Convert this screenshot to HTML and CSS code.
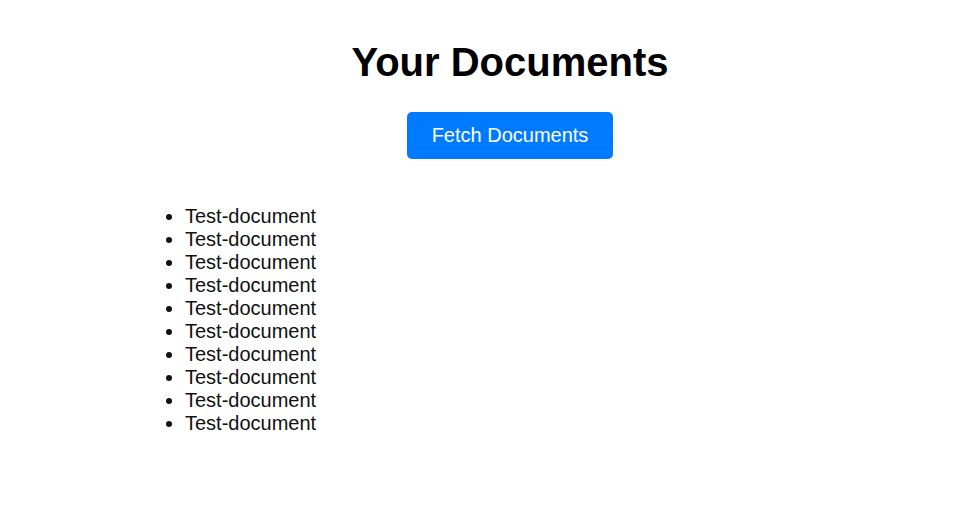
FILE: index.html
```html
<!DOCTYPE html>
<html lang="en">
<head>
<meta charset="utf-8">
<title>Your Documents</title>
<link rel="stylesheet" href="styles.css">
</head>
<body>
<div class="page">
  <h1 class="title">Your Documents</h1>
  <div class="actions">
    <button class="fetch-btn" type="button">Fetch Documents</button>
  </div>
  <ul class="doc-list">
    <li>Test-document</li>
    <li>Test-document</li>
    <li>Test-document</li>
    <li>Test-document</li>
    <li>Test-document</li>
    <li>Test-document</li>
    <li>Test-document</li>
    <li>Test-document</li>
    <li>Test-document</li>
    <li>Test-document</li>
  </ul>
</div>
</body>
</html>
```
FILE: styles.css
```css
html, body {
  margin: 0;
  padding: 0;
  background: #ffffff;
}
body {
  font-family: "Liberation Sans", Arial, sans-serif;
  color: #000;
}
.page {
  padding: 39px 90px 0 145px;
}
.title {
  margin: 0;
  font-size: 40px;
  line-height: 46px;
  font-weight: bold;
  text-align: center;
}
.actions {
  display: flex;
  justify-content: center;
  margin-top: 27px;
}
.fetch-btn {
  box-sizing: border-box;
  font-family: "Liberation Sans", Arial, sans-serif;
  font-size: 20px;
  line-height: 23px;
  white-space: nowrap;
  color: #ffffff;
  background: #007bff;
  border: none;
  border-radius: 5px;
  padding: 12px 25px;
  min-width: 206px;
  height: 47px;
  cursor: pointer;
}
.doc-list {
  margin: 46px 0 0 0;
  padding-left: 40px;
  font-size: 20px;
  line-height: 23px;
  color: #111;
}
```
